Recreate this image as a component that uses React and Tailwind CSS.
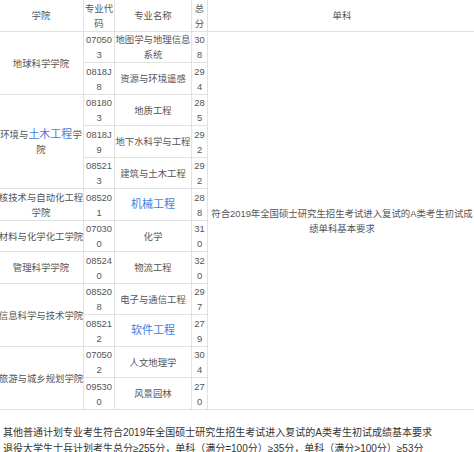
import React from "react";

const cell = "border border-[#e2e2e2] text-center align-middle p-0 break-all";
const blue = "text-[#3f7ddb] text-[11px]";

function Lines({ lines }) {
  return (
    <div className="flex flex-col items-center">
      {lines.map((l, i) => (
        <span key={i} className="whitespace-nowrap">{l}</span>
      ))}
    </div>
  );
}

const rows = [
  { college: { lines: ["地球科学学院"], span: 2 }, code: "070503", name: "地图学与地理信息系统", score: "308" },
  { code: "0818J8", name: "资源与环境遥感", score: "294" },
  {
    college: {
      lines: [
        <>环境与<span className={blue}>土木工程</span>学</>,
        "院",
      ],
      span: 3,
    },
    code: "081803",
    name: "地质工程",
    score: "285",
  },
  { code: "0818J9", name: "地下水科学与工程", score: "292" },
  { code: "085213", name: "建筑与土木工程", score: "292" },
  { college: { lines: ["核技术与自动化工程", "学院"], span: 1 }, code: "085201", name: <span className={blue}>机械工程</span>, score: "288" },
  { college: { lines: ["材料与化学化工学院"], span: 1 }, code: "070300", name: "化学", score: "310" },
  { college: { lines: ["管理科学学院"], span: 1 }, code: "085240", name: "物流工程", score: "320" },
  { college: { lines: ["信息科学与技术学院"], span: 2 }, code: "085208", name: "电子与通信工程", score: "297" },
  { code: "085212", name: <span className={blue}>软件工程</span>, score: "279" },
  { college: { lines: ["旅游与城乡规划学院"], span: 2 }, code: "070502", name: "人文地理学", score: "304" },
  { code: "095300", name: "风景园林", score: "270" },
];

export default function App() {
  return (
    <div
      className="w-[474px] h-[452px] overflow-hidden bg-white"
      style={{ fontFamily: '"Liberation Sans", "Noto Sans CJK SC", sans-serif' }}
    >
      <table className="table-fixed border-collapse w-[478px] ml-[-2px] mt-[-1px] text-[9.4px] leading-[15px] text-[#555]">
        <colgroup>
          <col className="w-[85px]" />
          <col className="w-[31px]" />
          <col className="w-[77px]" />
          <col className="w-[16px]" />
          <col className="w-[269px]" />
        </colgroup>
        <tbody>
          <tr className="h-[32px]">
            <td className={cell}>学院</td>
            <td className={cell}>专业代码</td>
            <td className={cell}>专业名称</td>
            <td className={cell}>总分</td>
            <td className={cell}>单科</td>
          </tr>
          {rows.map((r, i) => (
            <tr key={i} className={i % 2 === 0 ? "h-[31px]" : "h-[32px]"}>
              {r.college && (
                <td className={cell} rowSpan={r.college.span}>
                  <Lines lines={r.college.lines} />
                </td>
              )}
              <td className={cell}>{r.code}</td>
              <td className={cell}>{r.name}</td>
              <td className={cell}>{r.score}</td>
              {i === 0 && (
                <td className={cell + " px-[2px]"} rowSpan={12}>
                  符合2019年全国硕士研究生招生考试进入复试的A类考生初试成绩单科基本要求
                </td>
              )}
            </tr>
          ))}
        </tbody>
      </table>
      <div className="mt-[15px] pl-[3px] text-[10px] leading-[16px] text-[#333]">
        <div className="whitespace-nowrap">
          其他普通计划专业考生符合2019年全国硕士研究生招生考试进入复试的A类考生初试成绩基本要求
        </div>
        <div className="whitespace-nowrap">
          退役大学生士兵计划考生总分≥255分，单科（满分=100分）≥35分，单科（满分&gt;100分）≥53分
        </div>
      </div>
    </div>
  );
}
